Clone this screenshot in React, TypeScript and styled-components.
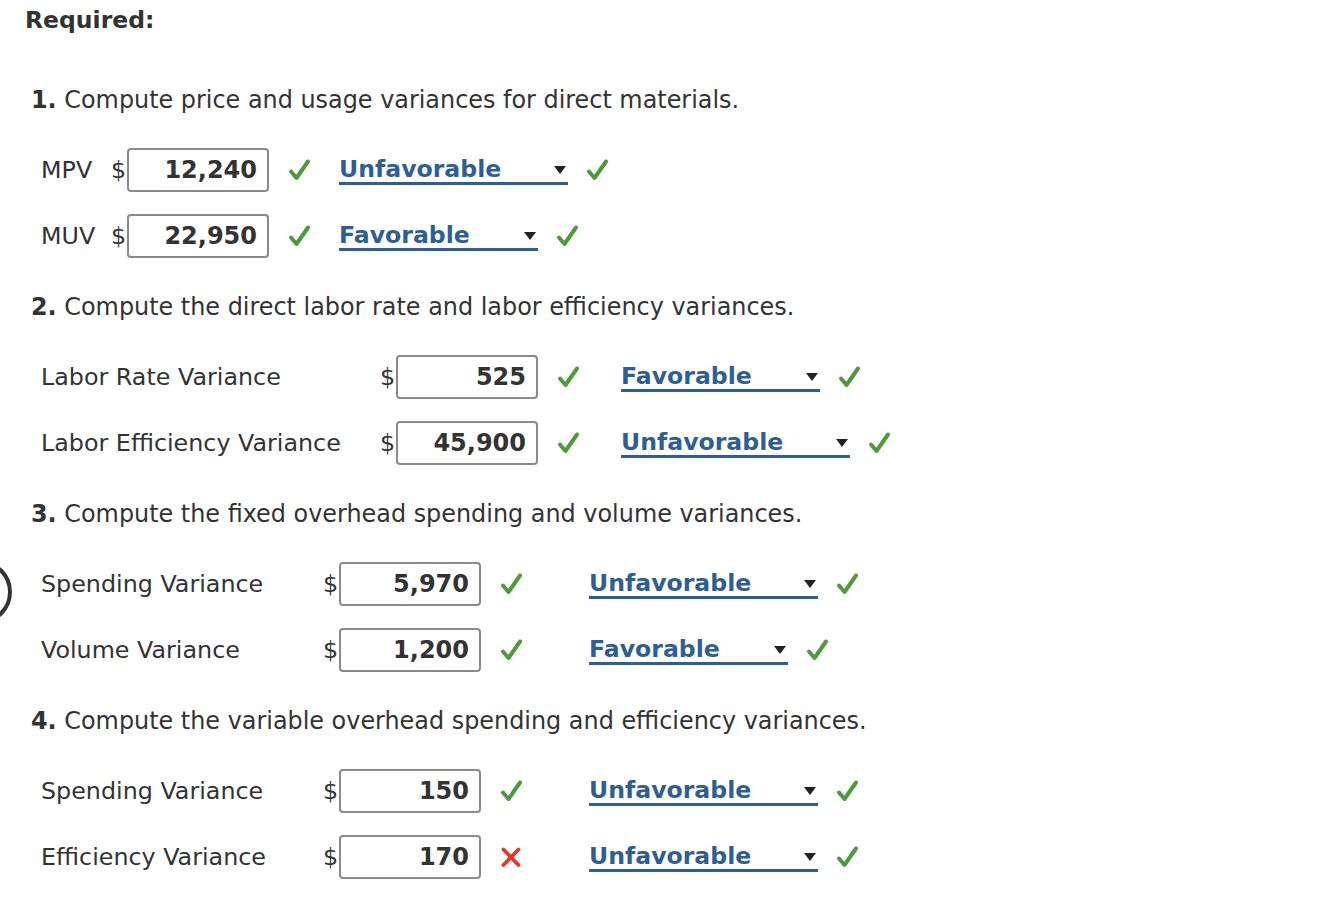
import React from "react";
import styled, { createGlobalStyle } from "styled-components";

const GlobalStyle = createGlobalStyle`
  body {
    margin: 0;
    background: #fff;
    font-family: "DejaVu Sans", Verdana, sans-serif;
    color: #333;
  }
`;

const Page = styled.div`
  position: relative;
  width: 1330px;
  min-height: 908px;
  padding: 5px 0 0 25px;
  box-sizing: border-box;
`;

const Edge = styled.div`
  position: absolute;
  left: -52px;
  top: 560px;
  width: 56px;
  height: 56px;
  border: 4px solid #333;
  border-radius: 50%;
`;

const Required = styled.div`
  font-size: 23.5px;
  font-weight: bold;
  line-height: 30px;
`;

const Section = styled.div<{ first?: boolean }>`
  margin-top: ${({ first }) => (first ? "50px" : "23px")};
  padding-left: 6px;
`;

const Heading = styled.div`
  font-size: 23.9px;
  line-height: 30px;
  margin-bottom: 22px;
  white-space: nowrap;
  b {
    font-weight: bold;
  }
`;

const Row = styled.div<{ labelWidth: number }>`
  display: grid;
  grid-template-columns: ${({ labelWidth }) => labelWidth}px 16px 142px auto;
  align-items: center;
  height: 66px;
  padding-left: 10px;
`;

const Label = styled.div`
  font-size: 23.8px;
  white-space: nowrap;
`;

const Dollar = styled.div`
  font-size: 23.8px;
  text-align: right;
  padding-right: 1px;
`;

const Amount = styled.div`
  height: 44px;
  box-sizing: border-box;
  border: 2px solid #8a8a8a;
  border-radius: 4px;
  background: #fff;
  font-size: 24px;
  font-weight: bold;
  text-align: right;
  padding-right: 10px;
  line-height: 40px;
  color: #333;
`;

const Result = styled.div<{ gap: number }>`
  display: flex;
  align-items: center;
  padding-left: 18px;
  svg:first-child {
    margin-right: ${({ gap }) => gap}px;
  }
`;

const Select = styled.div<{ width: number }>`
  width: ${({ width }) => width}px;
  height: 28px;
  box-sizing: border-box;
  display: flex;
  align-items: center;
  justify-content: space-between;
  background: #fff;
  border-radius: 4px 4px 0 0;
  border-bottom: 3px solid #2d5f96;
  margin-right: 17px;
  margin-top: 2px;
  font-size: 23.6px;
  font-weight: bold;
  color: #2d5f96;
  line-height: 25px;
  white-space: nowrap;
`;

const Arrow = styled.span`
  flex-shrink: 0;
  width: 0;
  height: 0;
  border-left: 6px solid transparent;
  border-right: 6px solid transparent;
  border-top: 8px solid #222;
  margin-right: 2px;
`;

const Check = () => (
  <svg width="24" height="24" viewBox="0 0 24 24">
    <path
      d="M4 13.5 L9.5 20 L21 3.5"
      fill="none"
      stroke="#4e9a3a"
      strokeWidth="4"
      strokeLinecap="round"
      strokeLinejoin="round"
    />
  </svg>
);

const Cross = () => (
  <svg width="24" height="24" viewBox="0 0 24 24">
    <path
      d="M4.5 4.5 L19.5 20 M19.5 4.5 L4.5 20"
      fill="none"
      stroke="#e2382c"
      strokeWidth="3.8"
      strokeLinecap="round"
    />
  </svg>
);

interface Line {
  label: string;
  amount: string;
  ok: boolean;
  choice: "Favorable" | "Unfavorable";
}

interface Part {
  num: string;
  text: string;
  labelWidth: number;
  gap: number;
  lines: Line[];
}

const parts: Part[] = [
  {
    num: "1.",
    text: "Compute price and usage variances for direct materials.",
    labelWidth: 70,
    gap: 28,
    lines: [
      { label: "MPV", amount: "12,240", ok: true, choice: "Unfavorable" },
      { label: "MUV", amount: "22,950", ok: true, choice: "Favorable" },
    ],
  },
  {
    num: "2.",
    text: "Compute the direct labor rate and labor efficiency variances.",
    labelWidth: 339,
    gap: 41,
    lines: [
      { label: "Labor Rate Variance", amount: "525", ok: true, choice: "Favorable" },
      { label: "Labor Efficiency Variance", amount: "45,900", ok: true, choice: "Unfavorable" },
    ],
  },
  {
    num: "3.",
    text: "Compute the fixed overhead spending and volume variances.",
    labelWidth: 282,
    gap: 66,
    lines: [
      { label: "Spending Variance", amount: "5,970", ok: true, choice: "Unfavorable" },
      { label: "Volume Variance", amount: "1,200", ok: true, choice: "Favorable" },
    ],
  },
  {
    num: "4.",
    text: "Compute the variable overhead spending and efficiency variances.",
    labelWidth: 282,
    gap: 66,
    lines: [
      { label: "Spending Variance", amount: "150", ok: true, choice: "Unfavorable" },
      { label: "Efficiency Variance", amount: "170", ok: false, choice: "Unfavorable" },
    ],
  },
];

export default function App() {
  return (
    <>
      <GlobalStyle />
      <Page>
        <Edge />
        <Required>Required:</Required>
        {parts.map((part, i) => (
          <Section key={part.num} first={i === 0}>
            <Heading>
              <b>{part.num}</b> {part.text}
            </Heading>
            {part.lines.map(line => (
              <Row key={line.label} labelWidth={part.labelWidth}>
                <Label>{line.label}</Label>
                <Dollar>$</Dollar>
                <Amount>{line.amount}</Amount>
                <Result gap={part.gap}>
                  {line.ok ? <Check /> : <Cross />}
                  <Select width={line.choice === "Favorable" ? 199 : 229}>
                    {line.choice}
                    <Arrow />
                  </Select>
                  <Check />
                </Result>
              </Row>
            ))}
          </Section>
        ))}
      </Page>
    </>
  );
}
